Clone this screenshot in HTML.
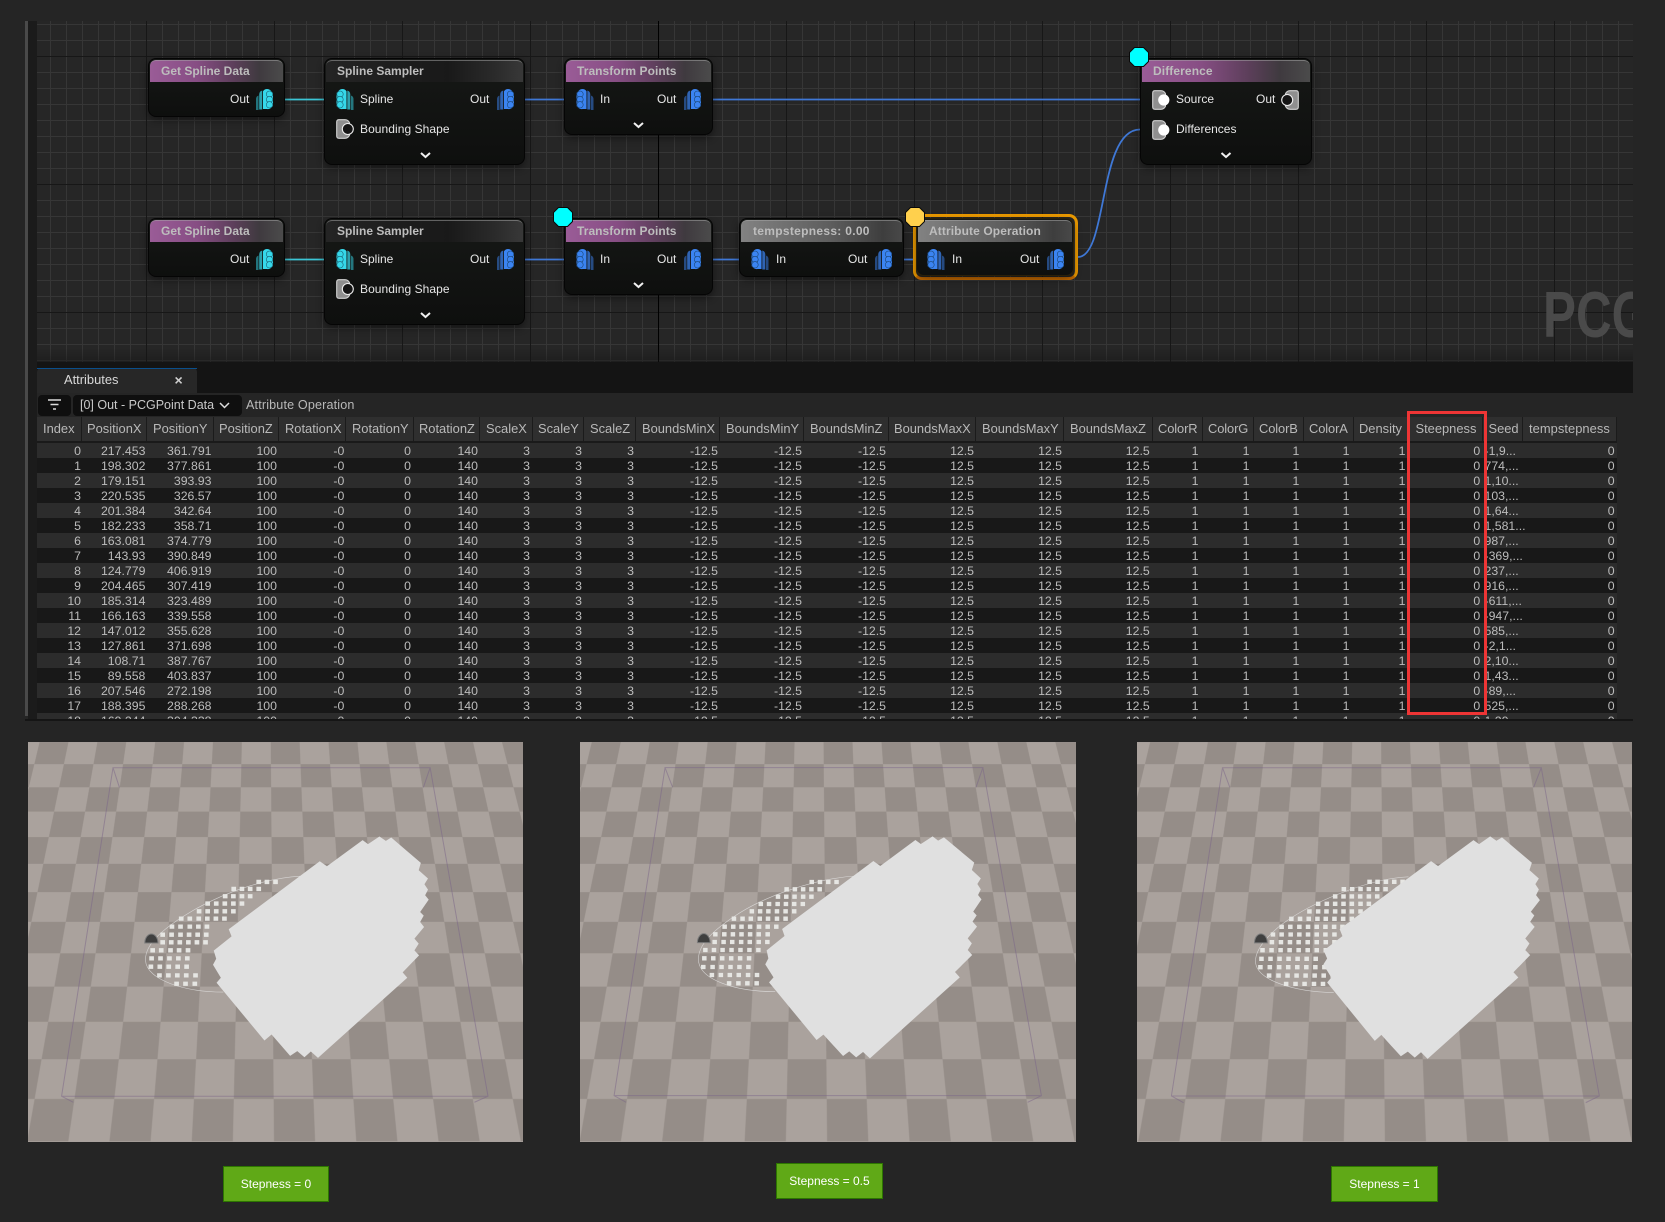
<!DOCTYPE html>
<html><head><meta charset="utf-8"><title>PCG Attributes</title>
<style>
html,body{margin:0;padding:0;width:1665px;height:1222px;overflow:hidden;background:#252525;font-family:"Liberation Sans",sans-serif}
div,span,svg{position:absolute}
.g{left:37px;top:21px;width:1596px;height:341px;overflow:hidden;background-color:#262626;background-image:linear-gradient(90deg,#171717 1px,transparent 1px),linear-gradient(#171717 1px,transparent 1px),linear-gradient(90deg,#363636 1px,transparent 1px),linear-gradient(#363636 1px,transparent 1px);background-size:128px 128px,128px 128px,16px 16px,16px 16px;background-position:109px 35px,109px 35px,109px 35px,109px 35px}
.n{border:1px solid #050505;border-radius:8px;background:linear-gradient(#161816,#0e0f0e);box-shadow:0 3px 8px rgba(0,0,0,.45);box-sizing:border-box}
.h{left:1px;right:1px;top:1px;height:21px;border-radius:6px 6px 0 0;border-top:1px solid rgba(170,170,170,.5)}
.pu{background:linear-gradient(90deg,#9a5c97 0,#874e84 35%,#5e3f5c 62%,#3f3a3f 82%,#4b4b4b 100%)}
.gr{background:linear-gradient(90deg,#828282,#5e5e5e 55%,#3e3e3e 88%,#484848)}
.dk{background:linear-gradient(90deg,#242424,#191919 62%,#2a2a2a 85%,#383838)}
.T{font-weight:bold;font-size:12px;line-height:16px;color:#bdbdbd;white-space:nowrap}
.L{font-size:12px;line-height:16px;color:#e6e6e6;white-space:nowrap}
.i{width:17.5px;height:21px}
.s{width:18px;height:20px}
.cy{color:#36d8ea}.bl{color:#3b84f2}
.m{transform:scaleX(-1)}
.hd{left:37px;top:417px;width:1580px;height:24px;background:#2f2f2f}
.hc{top:0;height:24px;line-height:24px;font-size:12.9px;color:#b9b9b9;white-space:nowrap}
.sep{top:0;width:1px;height:24px;background:#1b1b1b}
.tb{left:37px;top:443px;width:1580px;height:276px;overflow:hidden;background:repeating-linear-gradient(#2c2c2c 0,#2c2c2c 15px,#181818 15px,#181818 30px);font-size:12.3px;line-height:15px;color:#bcbcbc}
.c{top:1px;width:min-content;text-align:right;word-break:keep-all}
.v{top:742px;width:495px;height:400px;overflow:hidden;background:#aba39e}
.ck{left:0;top:0;width:800px;height:600px;transform-origin:0 0;background:repeating-conic-gradient(#aaa29d 0 25%,#958d88 0 50%) 0 0/80px 80px;filter:blur(.4px)}
.v svg{left:0;top:0;width:100%;height:100%}
.lb{box-sizing:border-box;background:#60a917;border:1px solid #2d7600;color:#fff;font-size:12px;text-align:center;line-height:34px}
</style></head>
<body>
<svg width="0" height="0" style="left:0;top:0">
<defs>
<symbol id="p" viewBox="0 0 17.5 21">
<path fill="currentColor" opacity=".5" d="M0 21V10q0-2.5 2.5-3.500V21z"/>
<path fill="currentColor" opacity=".72" d="M3.200 20.500V5.500q0-3 3-4V20.500z"/>
<path fill="currentColor" d="M7 20V2.200Q8.600 0 11 0q2.500 0 4 2l2 2v13l-2 2q-2 1.500-4 1z"/>
<circle cx="13.500" cy="5.200" r="3.200" fill="currentColor" stroke="#0d2a3a" stroke-opacity=".7" stroke-width=".6"/>
<circle cx="13.500" cy="10.500" r="3.200" fill="currentColor" stroke="#0d2a3a" stroke-opacity=".7" stroke-width=".6"/>
<circle cx="13.500" cy="15.800" r="3.200" fill="currentColor" stroke="#0d2a3a" stroke-opacity=".7" stroke-width=".6"/>
</symbol>
<symbol id="sh" viewBox="0 0 18 20">
<path d="M3 .7H9q3 0 4.500 3V16.300q-1.500 3-4.500 3H3Q.7 19.300.7 17V3Q.7.7 3 .7z" fill="#8f8f8f" stroke="#d2d2d2" stroke-width="1.100"/>
<circle cx="11.800" cy="10" r="5.500" fill="#141414" stroke="#eee" stroke-width="1.100"/>
</symbol>
<symbol id="sf" viewBox="0 0 18 20">
<path d="M3 .7H9q3 0 4.500 3V16.300q-1.500 3-4.500 3H3Q.7 19.300.7 17V3Q.7.7 3 .7z" fill="#8f8f8f" stroke="#d2d2d2" stroke-width="1.100"/>
<circle cx="11.800" cy="10" r="5.600" fill="#fff"/>
</symbol>
</defs>
</svg>

<!-- left strip -->
<div style="left:25px;top:21px;width:3px;height:695px;background:#4a4a4a"></div>
<div style="left:28px;top:21px;width:9px;height:698px;background:#1b1b1b"></div>

<!-- graph -->
<div class="g">
<div style="left:621px;top:0;width:1px;height:341px;background:#000"></div>
<div style="left:0;bottom:0;width:100%;height:14px;background:linear-gradient(rgba(20,20,20,0),rgba(20,20,20,.45))"></div>
<div style="left:1506px;top:257px;font-weight:bold;font-size:65px;line-height:74px;color:#4a4a4a;transform:scaleX(.76);transform-origin:0 0;white-space:nowrap">PCG</div>
</div>

<!-- wires -->
<svg style="left:0;top:0" width="1665" height="362" fill="none" stroke-width="1.800">
<path d="M285 99.500H336M285 259.500H336" stroke="#3cc6d6"/>
<path d="M513 99.500H564M712 99.500H1152M513 259.500H564M712 259.500H739M903 259.500H913M1078 257C1108 257 1098 129.500 1140 129.500H1152" stroke="#3f78d6"/>
</svg>

<!-- nodes row 1 -->
<div class="n" style="left:148px;top:58px;width:137px;height:59px"><div class="h pu"></div></div>
<div class="n" style="left:324px;top:58px;width:201px;height:107px"><div class="h dk"></div></div>
<div class="n" style="left:564px;top:58px;width:149px;height:77px"><div class="h pu"></div></div>
<div class="n" style="left:1140px;top:58px;width:172px;height:107px"><div class="h pu"></div></div>
<!-- nodes row 2 -->
<div class="n" style="left:148px;top:218px;width:137px;height:59px"><div class="h pu"></div></div>
<div class="n" style="left:324px;top:218px;width:201px;height:107px"><div class="h dk"></div></div>
<div class="n" style="left:564px;top:218px;width:149px;height:77px"><div class="h pu"></div></div>
<div class="n" style="left:739px;top:218px;width:165px;height:59px"><div class="h gr"></div></div>
<div style="left:912.500px;top:214px;width:165.500px;height:65.500px;box-sizing:border-box;border:3px solid #eb9a00;border-bottom-color:#c96c00;border-radius:9px"></div>
<div class="n" style="left:916px;top:218px;width:158px;height:58px;border-color:#2a2008"><div class="h gr"></div></div>

<!-- titles -->
<span class="T" style="left:161px;top:63px">Get Spline Data</span>
<span class="T" style="left:337px;top:63px">Spline Sampler</span>
<span class="T" style="left:577px;top:63px;letter-spacing:.05px">Transform Points</span>
<span class="T" style="left:1153px;top:63px;letter-spacing:.1px">Difference</span>
<span class="T" style="left:161px;top:223px">Get Spline Data</span>
<span class="T" style="left:337px;top:223px">Spline Sampler</span>
<span class="T" style="left:577px;top:223px;letter-spacing:.05px">Transform Points</span>
<span class="T" style="left:753px;top:223px;letter-spacing:.3px">tempstepness: 0.00</span>
<span class="T" style="left:929px;top:223px;letter-spacing:.1px">Attribute Operation</span>

<!-- labels -->
<span class="L" style="left:230px;top:91px">Out</span>
<span class="L" style="left:360px;top:91px">Spline</span>
<span class="L" style="left:470px;top:91px">Out</span>
<span class="L" style="left:360px;top:121px;letter-spacing:.06px">Bounding Shape</span>
<span class="L" style="left:600px;top:91px">In</span>
<span class="L" style="left:657px;top:91px">Out</span>
<span class="L" style="left:1176px;top:91px">Source</span>
<span class="L" style="left:1256px;top:91px">Out</span>
<span class="L" style="left:1176px;top:121px">Differences</span>
<span class="L" style="left:230px;top:251px">Out</span>
<span class="L" style="left:360px;top:251px">Spline</span>
<span class="L" style="left:470px;top:251px">Out</span>
<span class="L" style="left:360px;top:281px;letter-spacing:.06px">Bounding Shape</span>
<span class="L" style="left:600px;top:251px">In</span>
<span class="L" style="left:657px;top:251px">Out</span>
<span class="L" style="left:776px;top:251px">In</span>
<span class="L" style="left:848px;top:251px">Out</span>
<span class="L" style="left:952px;top:251px">In</span>
<span class="L" style="left:1020px;top:251px">Out</span>

<!-- pins -->
<svg class="i cy" style="left:256px;top:88.500px"><use href="#p"/></svg>
<svg class="i cy m" style="left:335.500px;top:88.500px"><use href="#p"/></svg>
<svg class="i bl" style="left:496.500px;top:88.500px"><use href="#p"/></svg>
<svg class="i bl m" style="left:575.500px;top:88.500px"><use href="#p"/></svg>
<svg class="i bl" style="left:683.500px;top:88.500px"><use href="#p"/></svg>
<svg class="i cy" style="left:256px;top:248.500px"><use href="#p"/></svg>
<svg class="i cy m" style="left:335.500px;top:248.500px"><use href="#p"/></svg>
<svg class="i bl" style="left:496.500px;top:248.500px"><use href="#p"/></svg>
<svg class="i bl m" style="left:575.500px;top:248.500px"><use href="#p"/></svg>
<svg class="i bl" style="left:683.500px;top:248.500px"><use href="#p"/></svg>
<svg class="i bl m" style="left:751px;top:248.500px"><use href="#p"/></svg>
<svg class="i bl" style="left:874.500px;top:248.500px"><use href="#p"/></svg>
<svg class="i bl m" style="left:927px;top:248.500px"><use href="#p"/></svg>
<svg class="i bl" style="left:1046.500px;top:248.500px"><use href="#p"/></svg>
<svg class="s" style="left:336px;top:119px"><use href="#sh"/></svg>
<svg class="s" style="left:336px;top:279px"><use href="#sh"/></svg>
<svg class="s" style="left:1152px;top:89.500px"><use href="#sf"/></svg>
<svg class="s" style="left:1152px;top:119.500px"><use href="#sf"/></svg>
<svg class="s m" style="left:1281px;top:89.500px"><use href="#sh"/></svg>

<!-- chevrons and badges -->
<svg style="left:0;top:0" width="1665" height="362" fill="none" stroke="#f0f0f0" stroke-width="2">
<path d="M421 153l4.500 4 4.500-4M421 313l4.500 4 4.500-4M634 123l4.500 4 4.500-4M634 283l4.500 4 4.500-4M1221.500 153l4.500 4 4.500-4"/>
<polygon points="558.500,207.500 567.500,207.500 572.500,212.500 572.500,221.500 567.500,226.500 558.500,226.500 553.500,221.500 553.500,212.500" fill="#00ffff" stroke="#0a0a0a" stroke-width="1"/>
<polygon points="1134.500,47.500 1143.500,47.500 1148.500,52.500 1148.500,61.500 1143.500,66.500 1134.500,66.500 1129.500,61.500 1129.500,52.500" fill="#00ffff" stroke="#0a0a0a" stroke-width="1"/>
<polygon points="910.500,207.500 919.500,207.500 924.500,212.500 924.500,221.500 919.500,226.500 910.500,226.500 905.500,221.500 905.500,212.500" fill="#ffd04d" stroke="#0a0a0a" stroke-width="1"/>
</svg>

<!-- tab bar -->
<div style="left:37px;top:362px;width:1596px;height:31px;background:#141414"></div>
<div style="left:37px;top:368px;width:160px;height:25px;background:#272727;border-radius:4px 4px 0 0"></div>
<div style="left:37px;top:368px;width:160px;height:1px;background:#0a4f8c"></div>
<span style="left:64px;top:372px;font-size:12.900px;line-height:16px;color:#d8d8d8">Attributes</span>
<span style="left:174.500px;top:372px;font-size:14px;line-height:16px;color:#cfcfcf;font-weight:bold">×</span>

<!-- toolbar -->
<div style="left:37px;top:393px;width:1596px;height:24px;background:#252525"></div>
<div style="left:38px;top:395px;width:33px;height:20.500px;background:#0f0f0f;border-radius:4px"></div>
<div style="left:72.500px;top:395px;width:169px;height:20.500px;background:#0f0f0f;border-radius:4px"></div>
<svg style="left:47px;top:398px" width="15" height="14" stroke="#dcdcdc" stroke-width="1.500" fill="none"><path d="M1 2h13M3.500 6.500h8M6 11h3"/></svg>
<span style="left:80px;top:397px;font-size:12.500px;line-height:16px;color:#c9c9c9;white-space:nowrap">[0] Out - PCGPoint Data</span>
<svg style="left:219px;top:402px" width="11" height="7" fill="none" stroke="#ddd" stroke-width="1.500"><path d="M1 1l4.500 4.500L10 1"/></svg>
<span style="left:246px;top:397px;font-size:12.600px;line-height:16px;color:#b9b9b9;white-space:nowrap;letter-spacing:.15px">Attribute Operation</span>

<!-- table header -->
<div class="hd">
<span class="hc" style="left:6px">Index</span><i class="sep" style="position:absolute;left:43.700px"></i>
<span class="hc" style="left:50px">PositionX</span><i class="sep" style="position:absolute;left:109.400px"></i>
<span class="hc" style="left:116px">PositionY</span><i class="sep" style="position:absolute;left:175.500px"></i>
<span class="hc" style="left:182px">PositionZ</span><i class="sep" style="position:absolute;left:241.200px"></i>
<span class="hc" style="left:248px">RotationX</span><i class="sep" style="position:absolute;left:308.400px"></i>
<span class="hc" style="left:315px">RotationY</span><i class="sep" style="position:absolute;left:375.500px"></i>
<span class="hc" style="left:382px">RotationZ</span><i class="sep" style="position:absolute;left:442.300px"></i>
<span class="hc" style="left:449px">ScaleX</span><i class="sep" style="position:absolute;left:494.800px"></i>
<span class="hc" style="left:501px">ScaleY</span><i class="sep" style="position:absolute;left:546.200px"></i>
<span class="hc" style="left:553px">ScaleZ</span><i class="sep" style="position:absolute;left:598.400px"></i>
<span class="hc" style="left:605px">BoundsMinX</span><i class="sep" style="position:absolute;left:682.300px"></i>
<span class="hc" style="left:689px">BoundsMinY</span><i class="sep" style="position:absolute;left:766.200px"></i>
<span class="hc" style="left:773px">BoundsMinZ</span><i class="sep" style="position:absolute;left:850.500px"></i>
<span class="hc" style="left:857px">BoundsMaxX</span><i class="sep" style="position:absolute;left:938.400px"></i>
<span class="hc" style="left:945px">BoundsMaxY</span><i class="sep" style="position:absolute;left:1026.200px"></i>
<span class="hc" style="left:1033px">BoundsMaxZ</span><i class="sep" style="position:absolute;left:1114.500px"></i>
<span class="hc" style="left:1121px;letter-spacing:-.1px">ColorR</span><i class="sep" style="position:absolute;left:1164.600px"></i>
<span class="hc" style="left:1171px;letter-spacing:-.1px">ColorG</span><i class="sep" style="position:absolute;left:1215.800px"></i>
<span class="hc" style="left:1222px;letter-spacing:-.1px">ColorB</span><i class="sep" style="position:absolute;left:1265.500px"></i>
<span class="hc" style="left:1272px;letter-spacing:-.1px">ColorA</span><i class="sep" style="position:absolute;left:1315.600px"></i>
<span class="hc" style="left:1322px">Density</span><i class="sep" style="position:absolute;left:1372px"></i>
<span class="hc" style="left:1378.500px">Steepness</span><i class="sep" style="position:absolute;left:1444.600px"></i>
<span class="hc" style="left:1451.500px">Seed</span><i class="sep" style="position:absolute;left:1485.300px"></i>
<span class="hc" style="left:1492px;letter-spacing:.05px">tempstepness</span><i class="sep" style="position:absolute;left:1579.400px"></i>
</div>
<div style="left:37px;top:441px;width:1580px;height:2px;background:#1a1a1a"></div>

<!-- table body -->
<div class="tb">
<div class="c" style="right:1536px">0 1 2 3 4 5 6 7 8 9 10 11 12 13 14 15 16 17 18</div>
<div class="c" style="right:1471.600px">217.453 198.302 179.151 220.535 201.384 182.233 163.081 143.93 124.779 204.465 185.314 166.163 147.012 127.861 108.71 89.558 207.546 188.395 169.244</div>
<div class="c" style="right:1405.500px">361.791 377.861 393.93 326.57 342.64 358.71 374.779 390.849 406.919 307.419 323.489 339.558 355.628 371.698 387.767 403.837 272.198 288.268 304.338</div>
<div class="c" style="right:1340px">100 100 100 100 100 100 100 100 100 100 100 100 100 100 100 100 100 100 100</div>
<div class="c" style="right:1272.700px">-0 -0 -0 -0 -0 -0 -0 -0 -0 -0 -0 -0 -0 -0 -0 -0 -0 -0 -0</div>
<div class="c" style="right:1206px">0 0 0 0 0 0 0 0 0 0 0 0 0 0 0 0 0 0 0</div>
<div class="c" style="right:1139px">140 140 140 140 140 140 140 140 140 140 140 140 140 140 140 140 140 140 140</div>
<div class="c" style="right:1087px">3 3 3 3 3 3 3 3 3 3 3 3 3 3 3 3 3 3 3</div>
<div class="c" style="right:1035px">3 3 3 3 3 3 3 3 3 3 3 3 3 3 3 3 3 3 3</div>
<div class="c" style="right:983px">3 3 3 3 3 3 3 3 3 3 3 3 3 3 3 3 3 3 3</div>
<div class="c" style="right:899px">-12.5 -12.5 -12.5 -12.5 -12.5 -12.5 -12.5 -12.5 -12.5 -12.5 -12.5 -12.5 -12.5 -12.5 -12.5 -12.5 -12.5 -12.5 -12.5</div>
<div class="c" style="right:815px">-12.5 -12.5 -12.5 -12.5 -12.5 -12.5 -12.5 -12.5 -12.5 -12.5 -12.5 -12.5 -12.5 -12.5 -12.5 -12.5 -12.5 -12.5 -12.5</div>
<div class="c" style="right:731px">-12.5 -12.5 -12.5 -12.5 -12.5 -12.5 -12.5 -12.5 -12.5 -12.5 -12.5 -12.5 -12.5 -12.5 -12.5 -12.5 -12.5 -12.5 -12.5</div>
<div class="c" style="right:643px">12.5 12.5 12.5 12.5 12.5 12.5 12.5 12.5 12.5 12.5 12.5 12.5 12.5 12.5 12.5 12.5 12.5 12.5 12.5</div>
<div class="c" style="right:555px">12.5 12.5 12.5 12.5 12.5 12.5 12.5 12.5 12.5 12.5 12.5 12.5 12.5 12.5 12.5 12.5 12.5 12.5 12.5</div>
<div class="c" style="right:467.300px">12.5 12.5 12.5 12.5 12.5 12.5 12.5 12.5 12.5 12.5 12.5 12.5 12.5 12.5 12.5 12.5 12.5 12.5 12.5</div>
<div class="c" style="right:418.600px">1 1 1 1 1 1 1 1 1 1 1 1 1 1 1 1 1 1 1</div>
<div class="c" style="right:367.500px">1 1 1 1 1 1 1 1 1 1 1 1 1 1 1 1 1 1 1</div>
<div class="c" style="right:317.700px">1 1 1 1 1 1 1 1 1 1 1 1 1 1 1 1 1 1 1</div>
<div class="c" style="right:267.600px">1 1 1 1 1 1 1 1 1 1 1 1 1 1 1 1 1 1 1</div>
<div class="c" style="right:211.500px">1 1 1 1 1 1 1 1 1 1 1 1 1 1 1 1 1 1 1</div>
<div class="c" style="right:136.800px">0 0 0 0 0 0 0 0 0 0 0 0 0 0 0 0 0 0 0</div>
<div style="left:1449px;top:1px;width:42px;height:285px;overflow:hidden"><div style="left:-1.500px;top:0;width:60px;white-space:nowrap">-1,9...<br>774,...<br>1,10...<br>103,...<br>1,64...<br>1,581...<br>987,...<br>-369,...<br>237,...<br>916,...<br>-611,...<br>-947,...<br>585,...<br>-2,1...<br>2,10...<br>1,43...<br>-89,...<br>525,...<br>1,20</div></div>
<div class="c" style="right:2.400px">0 0 0 0 0 0 0 0 0 0 0 0 0 0 0 0 0 0 0</div>
</div>
<div style="left:25px;top:719px;width:1608px;height:2px;background:#151515"></div>

<!-- red box -->
<div style="left:1406.500px;top:411px;width:80.500px;height:303.500px;box-sizing:border-box;border:3px solid #ee3535"></div>

<!-- viewport 1 -->
<div class="v" style="left:28px">
<div class="ck" style="transform:matrix3d(1.0285,0,0,0,.1915,-.7677,0,.0008145,0,0,1,0,-165.4,399.3,0,1)"></div>
<svg viewBox="78 36 1386 1198" preserveAspectRatio="none" fill="none">
<path vector-effect="non-scaling-stroke" d="M334 172L316 113H1204L1185 172M1204 113L1366 1097L1328 1115M205 1115L172 1097L316 113M172 1097H1366" stroke="#7a6488" stroke-opacity=".5"/>
<path vector-effect="non-scaling-stroke" d="M840 438C720 445 590 505 510 560C460 595 405 640 407 690C410 750 520 785 625 785" stroke="#e4e4e4" stroke-opacity=".8" stroke-width=".6"/>
<path d="M724 455h.1M747 455h.1M771 455h.1M654 476h.1M677 476h.1M700 476h.1M724 476h.1M630 498h.1M653 498h.1M677 498h.1M700 498h.1M581 520h.1M605 520h.1M629 520h.1M653 520h.1M677 520h.1M557 543h.1M581 543h.1M605 543h.1M629 543h.1M653 543h.1M507 565h.1M531 565h.1M556 565h.1M580 565h.1M604 565h.1M628 565h.1M481 589h.1M505 589h.1M531 589h.1M555 589h.1M579 589h.1M455 613h.1M480 613h.1M505 613h.1M529 613h.1M553 613h.1M577 613h.1M455 636h.1M479 636h.1M503 636h.1M527 636h.1M551 636h.1M575 636h.1M427 660h.1M451 660h.1M477 660h.1M501 660h.1M526 660h.1M424 684h.1M449 684h.1M474 684h.1M499 684h.1M524 684h.1M422 709h.1M447 709h.1M472 709h.1M497 709h.1M522 709h.1M446 735h.1M471 735h.1M496 735h.1M521 735h.1M547 735h.1M494 760h.1M519 760h.1M545 760h.1" stroke="#e6e6e3" stroke-width="13" stroke-linecap="square"/>
<path d="M405 638A18.500 27 0 0 1 442 638Z" fill="#3f3f3f" stroke="#7d7d7d" stroke-width="3"/>
<polygon fill="#e0e0e0" points="895,393 915,408 1015,330 1030,342 1062,319 1080,332 1095,322 1178,398 1172,420 1198,445 1188,462 1198,478 1190,495 1200,508 1176,545 1186,556 1176,575 1187,590 1160,625 1172,640 1160,660 1173,675 1127,726 1140,742 890,982 870,963 852,980 832,962 812,976 760,912 740,930 606,757 618,742 596,703 605,685 598,661 648,618 640,597"/>
</svg>
</div>

<!-- viewport 2 -->
<div class="v" style="left:580px;width:495.500px">
<div class="ck" style="transform:matrix3d(1.031,0,0,0,.1915,-.7677,0,.0008145,0,0,1,0,-165.3,399.3,0,1)"></div>
<svg viewBox="58 36 1439 1200" preserveAspectRatio="none" fill="none">
<path vector-effect="non-scaling-stroke" d="M327 172L305 113H1228L1208 172M1228 113L1398 1097L1358 1117M192 1117L157 1097L305 113M157 1097H1398" stroke="#7a6488" stroke-opacity=".5"/>
<path vector-effect="non-scaling-stroke" d="M860 438C740 445 590 500 505 560C455 595 400 640 402 690C405 750 510 785 625 785" stroke="#e4e4e4" stroke-opacity=".8" stroke-width=".6"/>
<path d="M731 456h.1M755 456h.1M779 456h.1M803 456h.1M658 478h.1M682 478h.1M706 478h.1M730 478h.1M754 478h.1M633 500h.1M657 500h.1M681 500h.1M706 500h.1M730 500h.1M583 522h.1M607 522h.1M632 522h.1M656 522h.1M680 522h.1M705 522h.1M557 544h.1M581 544h.1M605 544h.1M630 544h.1M655 544h.1M680 544h.1M505 566h.1M530 566h.1M554 566h.1M580 566h.1M604 566h.1M630 566h.1M655 566h.1M478 590h.1M503 590h.1M527 590h.1M552 590h.1M578 590h.1M603 590h.1M628 590h.1M451 613h.1M477 613h.1M502 613h.1M527 613h.1M552 613h.1M577 613h.1M603 613h.1M449 636h.1M475 636h.1M500 636h.1M526 636h.1M551 636h.1M577 636h.1M602 636h.1M422 660h.1M447 660h.1M472 660h.1M498 660h.1M524 660h.1M550 660h.1M576 660h.1M419 685h.1M445 685h.1M471 685h.1M497 685h.1M523 685h.1M549 685h.1M416 711h.1M443 711h.1M469 711h.1M495 711h.1M521 711h.1M547 711h.1M441 735h.1M467 735h.1M493 735h.1M519 735h.1M546 735h.1M572 735h.1M491 760h.1M518 760h.1M544 760h.1M571 760h.1" stroke="#e6e6e3" stroke-width="13" stroke-linecap="square"/>
<path d="M399 638A18.500 27 0 0 1 436 638Z" fill="#3f3f3f" stroke="#7d7d7d" stroke-width="3"/>
<polygon fill="#e0e0e0" points="910,393 930,408 1032,330 1048,342 1082,319 1098,332 1115,322 1203,398 1196,420 1222,445 1212,462 1222,478 1214,495 1224,508 1200,545 1210,556 1198,575 1211,590 1184,625 1196,640 1184,660 1197,675 1147,726 1161,742 900,985 880,966 860,982 840,964 822,978 765,914 745,930 607,757 620,742 596,703 605,685 600,661 652,618 645,597"/>
</svg>
</div>

<!-- viewport 3 -->
<div class="v" style="left:1137px">
<div class="ck" style="transform:matrix3d(1.0275,0,0,0,.1915,-.7677,0,.0008145,0,0,1,0,-163.1,399.3,0,1)"></div>
<svg viewBox="49 36 1424 1199" preserveAspectRatio="none" fill="none">
<path vector-effect="non-scaling-stroke" d="M316 172L295 113H1212L1190 172M1212 113L1379 1097L1340 1117M183 1117L148 1097L295 113M148 1097H1379" stroke="#7a6488" stroke-opacity=".5"/>
<path vector-effect="non-scaling-stroke" d="M830 440C720 445 570 510 490 565C445 595 388 650 390 695C393 750 500 785 615 787" stroke="#e4e4e4" stroke-opacity=".8" stroke-width=".6"/>
<path d="M718 455h.1M741 455h.1M765 455h.1M789 455h.1M813 455h.1M644 477h.1M668 477h.1M692 477h.1M716 477h.1M740 477h.1M764 477h.1M619 499h.1M643 499h.1M667 499h.1M691 499h.1M716 499h.1M740 499h.1M570 521h.1M595 521h.1M619 521h.1M643 521h.1M667 521h.1M692 521h.1M716 521h.1M545 544h.1M570 544h.1M594 544h.1M619 544h.1M643 544h.1M667 544h.1M692 544h.1M493 566h.1M518 566h.1M543 566h.1M568 566h.1M592 566h.1M617 566h.1M642 566h.1M667 566h.1M465 590h.1M490 590h.1M516 590h.1M541 590h.1M566 590h.1M591 590h.1M616 590h.1M640 590h.1M440 613h.1M465 613h.1M491 613h.1M516 613h.1M541 613h.1M566 613h.1M591 613h.1M617 613h.1M437 636h.1M463 636h.1M489 636h.1M514 636h.1M540 636h.1M566 636h.1M592 636h.1M617 636h.1M410 660h.1M436 660h.1M462 660h.1M488 660h.1M514 660h.1M540 660h.1M566 660h.1M592 660h.1M407 686h.1M433 686h.1M459 686h.1M485 686h.1M511 686h.1M537 686h.1M563 686h.1M404 711h.1M431 711h.1M458 711h.1M484 711h.1M510 711h.1M536 711h.1M562 711h.1M588 711h.1M429 736h.1M456 736h.1M482 736h.1M508 736h.1M534 736h.1M560 736h.1M586 736h.1M612 736h.1M478 761h.1M505 761h.1M531 761h.1M558 761h.1M584 761h.1M610 761h.1" stroke="#e6e6e3" stroke-width="13" stroke-linecap="square"/>
<path d="M387 638A18.500 27 0 0 1 424 638Z" fill="#3f3f3f" stroke="#7d7d7d" stroke-width="3"/>
<polygon fill="#e0e0e0" points="895,393 915,408 1017,330 1033,342 1065,319 1083,332 1099,322 1185,398 1178,420 1205,445 1195,462 1205,478 1197,495 1208,510 1182,545 1192,556 1180,575 1193,590 1166,625 1178,640 1166,660 1180,675 1132,726 1146,742 885,986 866,966 848,982 828,964 808,978 752,914 733,932 596,757 608,742 585,703 596,685 586,661 640,618 632,597"/>
</svg>
</div>

<!-- labels -->
<div class="lb" style="left:223px;top:1166px;width:106px;height:36px">Stepness = 0</div>
<div class="lb" style="left:776px;top:1163px;width:107px;height:36px">Stepness = 0.5</div>
<div class="lb" style="left:1331px;top:1166px;width:107px;height:36px">Stepness = 1</div>
</body></html>
